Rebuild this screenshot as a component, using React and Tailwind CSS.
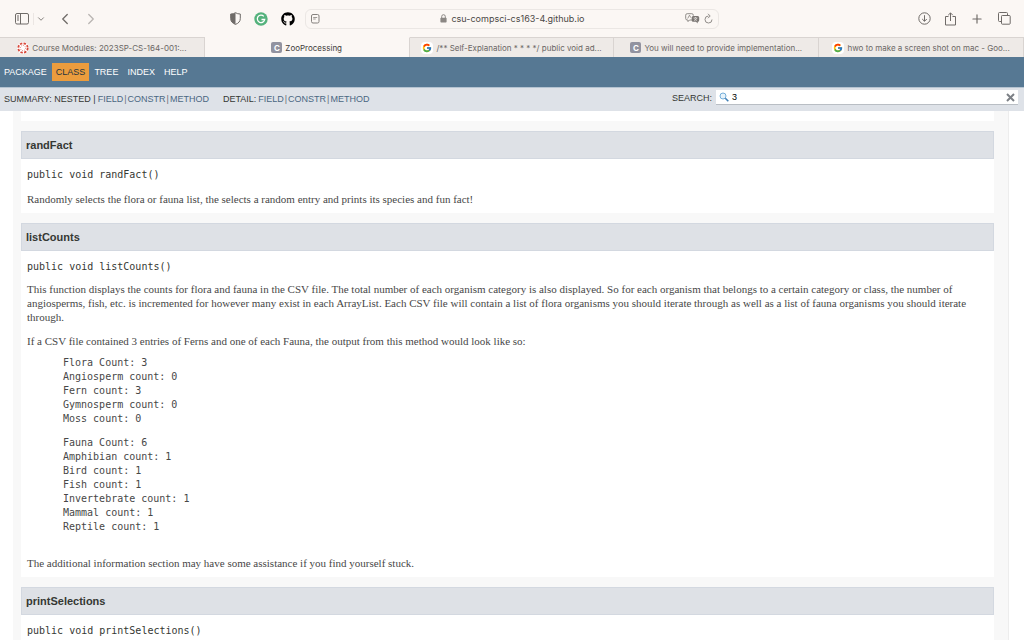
import { useState } from 'react'
import { ChevronLeft, ChevronRight, ChevronDown, Plus } from 'lucide-react'
import { FaGithub } from 'react-icons/fa'
import { FcGoogle } from 'react-icons/fc'

const tabs = [
  { title: 'Course Modules: 2023SP-CS-164-001:...', icon: 'canvas' },
  { title: 'ZooProcessing', icon: 'letter', active: true },
  { title: '/** Self-Explanation * * * */ public void ad...', icon: 'google' },
  { title: 'You will need to provide implementation...', icon: 'letter' },
  { title: 'hwo to make a screen shot on mac - Goo...', icon: 'google' }
]

const navLinks = ['PACKAGE', 'CLASS', 'TREE', 'INDEX', 'HELP']

const floraOutput = `Flora Count: 3
Angiosperm count: 0
Fern count: 3
Gymnosperm count: 0
Moss count: 0`

const faunaOutput = `Fauna Count: 6
Amphibian count: 1
Bird count: 1
Fish count: 1
Invertebrate count: 1
Mammal count: 1
Reptile count: 1`

function SidebarIcon() {
  return (
    <svg width="14" height="12" viewBox="0 0 14 12" fill="none" stroke="#6f6b68">
      <rect x="0.5" y="0.5" width="13" height="10.5" rx="1.5" />
      <path d="M5.5 0.5v10.5M2 3h2M2 5h2M2 7h2" />
    </svg>
  )
}

function ShieldIcon() {
  return (
    <svg width="11" height="13" viewBox="0 0 11 13">
      <path d="M5.5 0.7C4.2 1.6 2.6 2 0.7 2v4.6c0 2.8 1.8 4.7 4.8 5.8 3-1.1 4.8-3 4.8-5.8V2C8.4 2 6.8 1.6 5.5 0.7z" fill="#fbf7f4" stroke="#6f6b68" />
      <path d="M5.5 0.7C4.2 1.6 2.6 2 0.7 2v4.6c0 2.8 1.8 4.7 4.8 5.8z" fill="#6f6b68" />
    </svg>
  )
}

function GrammarlyIcon() {
  return (
    <svg width="14" height="14" viewBox="0 0 14 14" fill="none">
      <circle cx="7" cy="7" r="6.7" fill="#54b27c" />
      <path d="M9.8 4.4A3.7 3.7 0 1 0 10.7 7.5H7.5" stroke="#fff" strokeWidth="1.3" />
    </svg>
  )
}

function ReaderIcon() {
  return (
    <svg width="9" height="10" viewBox="0 0 9 10" fill="none" stroke="#85817e">
      <rect x="0.5" y="0.5" width="7.5" height="8.5" rx="1.5" />
      <path d="M2.2 3.5h4M2.2 5h2.5" strokeWidth="0.8" />
    </svg>
  )
}

function LockIcon() {
  return (
    <svg width="7" height="9" viewBox="0 0 7 9">
      <path d="M1.7 4.2V2.5a1.8 1.8 0 0 1 3.6 0v1.7" fill="none" stroke="#8b8784" />
      <rect x="0.4" y="3.8" width="6.2" height="4.7" rx="0.8" fill="#8b8784" />
    </svg>
  )
}

function TranslateIcon() {
  return (
    <svg width="15" height="11" viewBox="0 0 15 11" fill="none">
      <path d="M7 7H4.5L3 8.6V7h-.8A1.5 1.5 0 0 1 0.7 5.5V2.2A1.5 1.5 0 0 1 2.2 0.7h4.6a1.5 1.5 0 0 1 1.5 1.5v0.6" stroke="#85817e" strokeWidth="0.9" />
      <path d="M2.7 5.5L4.5 2.2l1.4 2.5" stroke="#85817e" strokeWidth="0.8" />
      <path d="M8.2 3h4.5a1.5 1.5 0 0 1 1.5 1.5v2.8a1.5 1.5 0 0 1-1.5 1.5v1.6L11 8.8H8.2a1.5 1.5 0 0 1-1.5-1.5V4.5A1.5 1.5 0 0 1 8.2 3z" fill="#7b7774" />
      <path d="M8.6 5h3.8M10.5 4v1M9 7.5c1.5-.4 2.2-1.2 2.6-2.5M9.4 5.5c.5 1 1.4 1.7 2.6 2" stroke="#fbf7f4" strokeWidth="0.6" />
    </svg>
  )
}

function ReloadIcon() {
  return (
    <svg width="9" height="11" viewBox="0 0 9 11" fill="none" stroke="#85817e">
      <path d="M4.5 3A3.5 3.5 0 1 0 8 6.5M4 0.8L6.2 3 4 5.2" strokeWidth="0.9" />
    </svg>
  )
}

function DownloadIcon() {
  return (
    <svg width="13" height="13" viewBox="0 0 13 13" fill="none" stroke="#6f6b68">
      <circle cx="6.5" cy="6.5" r="5.7" />
      <path d="M6.5 3.2v6M4.2 7l2.3 2.3L8.8 7" />
    </svg>
  )
}

function ShareIcon() {
  return (
    <svg width="11" height="14" viewBox="0 0 11 14" fill="none" stroke="#6f6b68">
      <path d="M3.5 4.5h-3v8.5h10V4.5h-3M5.5 9V1M3.2 3.2L5.5 0.9l2.3 2.3" />
    </svg>
  )
}

function TabsIcon() {
  return (
    <svg width="13" height="13" viewBox="0 0 13 13" fill="none" stroke="#6f6b68">
      <rect x="3.5" y="3.5" width="8.7" height="8.7" rx="0.8" />
      <path d="M3.5 9.5h-2a1 1 0 0 1-1-1v-7a1 1 0 0 1 1-1h7a1 1 0 0 1 1 1v2" />
    </svg>
  )
}

function Favicon({ type }) {
  if (type === 'google') {
    return (
      <span className="flex size-3 shrink-0 items-center justify-center rounded-sm bg-white">
        <FcGoogle className="size-[10px]" />
      </span>
    )
  }
  if (type === 'canvas') {
    return (
      <svg className="shrink-0" width="12" height="12" viewBox="0 0 12 12" fill="none">
        <circle cx="6" cy="6" r="6" fill="#fff" />
        <circle cx="6" cy="6" r="4.7" stroke="#d8483a" strokeWidth="1.8" strokeDasharray="2.4 1.29" />
        <circle cx="6" cy="6" r="2.6" stroke="#d8483a" strokeWidth="0.8" strokeDasharray="0.8 1.24" />
      </svg>
    )
  }
  return (
    <span className="flex size-[11px] shrink-0 items-center justify-center rounded-xs bg-[#9293a0] text-[8px] leading-none font-bold text-white">
      C
    </span>
  )
}

function LinkGroup({ label, items }) {
  return (
    <div className="flex gap-px text-[#4a6782]">
      <span className="mr-px text-[#353833]">{label}</span>
      {items.map((item, index) => (
        <span key={item} className="flex gap-px">
          {index > 0 && <span className="text-[#6b7078]">|</span>}
          <a href={`#${item.toLowerCase()}`}>{item}</a>
        </span>
      ))}
    </div>
  )
}

function MethodSection({ name, children }) {
  return (
    <section className="bg-white">
      <h3 className="border border-[#d3d8e0] bg-[#dee1e6] px-1 py-[6px] font-['Liberation_Sans',Arial,sans-serif] text-[11px] leading-[14px] font-bold text-[#353833]">
        {name}
      </h3>
      <div className="px-[6px] pt-[9px] pb-[7px]">
        <div className="font-['DejaVu_Sans_Mono',monospace] text-[10px] leading-[14px] text-[#353833]">
          public void {name}()
        </div>
        {children}
      </div>
    </section>
  )
}

export default function App() {
  const [query, setQuery] = useState('3')

  return (
    <div className="flex h-screen flex-col overflow-hidden bg-white font-['Liberation_Sans',Arial,sans-serif]">
      <header className="bg-[#fbf7f4] font-['Inter',sans-serif]">
        <div className="grid h-[37px] grid-cols-[1fr_414px_1fr] items-center">
          <div className="flex items-center justify-between pr-[10px] pl-[15px]">
            <div className="flex items-center text-[#6f6b68]">
              <button aria-label="Sidebar"><SidebarIcon /></button>
              <span className="ml-1 h-3 w-px bg-[#ebe6e3]" />
              <button aria-label="Tab groups" className="ml-[2px]"><ChevronDown size={10} /></button>
              <button aria-label="Back" className="ml-[10px]"><ChevronLeft size={18} strokeWidth={1.75} /></button>
              <button aria-label="Forward" className="ml-2 text-[#b9b5b2]"><ChevronRight size={18} strokeWidth={1.75} /></button>
            </div>
            <div className="flex items-center gap-[13px]">
              <button aria-label="Privacy report"><ShieldIcon /></button>
              <button aria-label="Grammarly"><GrammarlyIcon /></button>
              <button aria-label="GitHub"><FaGithub size={14} /></button>
            </div>
          </div>
          <div className="flex h-5 items-center justify-between rounded-md border border-[#ebe7e4] px-[5px]">
            <button aria-label="Reader"><ReaderIcon /></button>
            <div className="flex items-center gap-1 pl-5 text-[9px] leading-[14px] text-[#4b4846]">
              <LockIcon />
              csu-compsci-cs163-4.github.io
            </div>
            <div className="flex items-center gap-1">
              <button aria-label="Translate"><TranslateIcon /></button>
              <button aria-label="Reload"><ReloadIcon /></button>
            </div>
          </div>
          <div className="flex items-center justify-end gap-[14px] pr-[13px] text-[#6f6b68]">
            <button aria-label="Downloads"><DownloadIcon /></button>
            <button aria-label="Share"><ShareIcon /></button>
            <button aria-label="New tab"><Plus size={14} strokeWidth={2} /></button>
            <button aria-label="Show tabs"><TabsIcon /></button>
          </div>
        </div>
        <div className="grid h-5 grid-cols-5">
          {tabs.map((tab) => (
            <button
              key={tab.title}
              className={
                tab.active
                  ? 'flex items-center justify-center gap-[3px] border-t border-r border-t-transparent border-r-[#d9d4d1] text-[8px] text-[#3f3c3a]'
                  : 'flex min-w-0 items-center justify-center gap-[3px] border-t border-r border-[#d9d4d1] bg-[#eeeae7] text-[8px] text-[#6b6765]'
              }
            >
              <Favicon type={tab.icon} />
              <span className="whitespace-nowrap">{tab.title}</span>
            </button>
          ))}
        </div>
      </header>

      <nav className="flex h-[30px] items-center gap-px bg-[#567893] text-[9px] leading-[12px] text-white">
        {navLinks.map((link) => (
          <a
            key={link}
            href={`#${link.toLowerCase()}`}
            className={link === 'CLASS' ? 'bg-[#eb9c3d] px-1 py-[3px] text-[#253441]' : 'px-1'}
          >
            {link}
          </a>
        ))}
      </nav>

      <div className="flex h-6 items-center justify-between border-t border-[#b4c3d1] bg-[#dee2e8] pr-[6px] pb-[2px] pl-1 text-[9px] leading-[12px]">
        <div className="flex gap-[14px]">
          <LinkGroup label="SUMMARY: NESTED |" items={['FIELD', 'CONSTR', 'METHOD']} />
          <LinkGroup label="DETAIL:" items={['FIELD', 'CONSTR', 'METHOD']} />
        </div>
        <form className="flex items-center gap-1 pb-[2px] text-[#353833]" onSubmit={(event) => event.preventDefault()}>
          <label htmlFor="search">SEARCH:</label>
          <div className="flex h-[15px] w-[302px] items-center border-b border-[#b9bec4] bg-white pl-[3px]">
            <svg width="10" height="10" viewBox="0 0 10 10" fill="none">
              <circle cx="4" cy="4" r="3" fill="#e6f2fa" stroke="#74aeda" />
              <path d="M6.3 6.3l3 3" stroke="#3f7fb5" strokeWidth="1.6" />
            </svg>
            <input
              id="search"
              value={query}
              onChange={(event) => setQuery(event.target.value)}
              className="h-3 min-w-0 flex-1 pl-[3px] text-[9px] text-black outline-none"
            />
            <button type="reset" aria-label="Clear search" className="px-[3px]" onClick={() => setQuery('')}>
              <svg width="9" height="9" viewBox="0 0 9 9" stroke="#7c8086" strokeWidth="2">
                <path d="M1 1l7 7M8 1L1 8" />
              </svg>
            </button>
          </div>
        </form>
      </div>

      <main className="min-h-0 flex-1 overflow-hidden pr-[15px] pl-[13px]">
        <div className="flex flex-col gap-[10px] border-r border-[#ededed] bg-[#f8f8f8] pr-[14px] pl-2 font-['Liberation_Serif',serif] text-[11px] leading-[14px] text-[#474747]">
          <div className="h-[10px] bg-white" />
          <MethodSection name="randFact">
            <p className="mt-[10px]">
              Randomly selects the flora or fauna list, the selects a random entry and prints its species and fun fact!
            </p>
          </MethodSection>
          <MethodSection name="listCounts">
            <p className="mt-2">
              This function displays the counts for flora and fauna in the CSV file. The total number of each organism
              category is also displayed. So for each organism that belongs to a certain category or class, the number of
              angiosperms, fish, etc. is incremented for however many exist in each ArrayList. Each CSV file will contain a
              list of flora organisms you should iterate through as well as a list of fauna organisms you should iterate
              through.
            </p>
            <p className="mt-[10px]">
              If a CSV file contained 3 entries of Ferns and one of each Fauna, the output from this method would look like
              so:
            </p>
            <pre className="mt-2 ml-9 font-['DejaVu_Sans_Mono',monospace] text-[10px] leading-[14px]">{floraOutput}</pre>
            <pre className="mt-[10px] ml-9 font-['DejaVu_Sans_Mono',monospace] text-[10px] leading-[14px]">{faunaOutput}</pre>
            <p className="mt-[22px]">
              The additional information section may have some assistance if you find yourself stuck.
            </p>
          </MethodSection>
          <MethodSection name="printSelections" />
        </div>
      </main>
    </div>
  )
}
